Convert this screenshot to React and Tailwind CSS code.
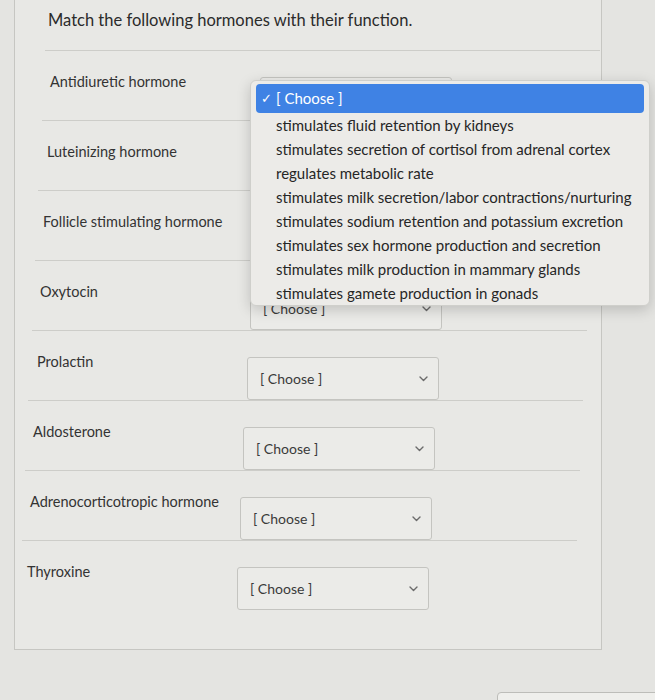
const rows = [
  { label: 'Antidiuretic hormone', shift: 'ml-[30px]', covered: true },
  { label: 'Luteinizing hormone', shift: 'ml-[27px]', covered: true },
  { label: 'Follicle stimulating hormone', shift: 'ml-[23px]', covered: true },
  { label: 'Oxytocin', shift: 'ml-[20px]' },
  { label: 'Prolactin', shift: 'ml-[17px]' },
  { label: 'Aldosterone', shift: 'ml-[13px]' },
  { label: 'Adrenocorticotropic hormone', shift: 'ml-[10px]' },
  { label: 'Thyroxine', shift: 'ml-[7px]' },
]

const options = [
  'stimulates fluid retention by kidneys',
  'stimulates secretion of cortisol from adrenal cortex',
  'regulates metabolic rate',
  'stimulates milk secretion/labor contractions/nurturing',
  'stimulates sodium retention and potassium excretion',
  'stimulates sex hormone production and secretion',
  'stimulates milk production in mammary glands',
  'stimulates gamete production in gonads',
]

function Chevron() {
  return (
    <svg width="9" height="6" viewBox="0 0 9 6" fill="none" className="text-[#6b6b6b]">
      <path d="M1 1l3.5 3.5L8 1" stroke="currentColor" strokeWidth="1.4" strokeLinecap="round" strokeLinejoin="round" />
    </svg>
  )
}

// the top three selects sit under the open menu, so their text is never seen
function FakeSelect({ covered }) {
  return (
    <div className="mt-[26px] flex h-[43px] w-[192px] items-center justify-between rounded-[3px] border border-[#c4c4c0] bg-[#ebebe8] pl-[12px] pr-[10px] text-[14px] text-[#3a3a3a]">
      <span>{covered ? '' : '[ Choose ]'}</span>
      <Chevron />
    </div>
  )
}

export default function App() {
  return (
    <div className="relative h-[700px] w-[655px] overflow-hidden bg-[#e4e4e1] font-['Lato','Open_Sans',sans-serif] text-[#2e2e2e]">
      <div className="ml-[14px] h-[650px] w-[588px] border-x border-b border-[#c6c6c2] bg-[#e8e8e5]">
        <h1 className="ml-[33px] pt-[8px] text-[16.5px] leading-[24px] text-[#2b2b2b]">Match the following hormones with their function.</h1>
        <div className="mt-[18px]">
          {rows.map((r) => (
            <div key={r.label} className={`${r.shift} h-[70px] w-[555px] border-t border-[#cdcdc9]`}>
              <div className="flex pl-[5px]">
                <div className="w-[210px] pt-[21px] text-[14.5px] leading-[20px] text-[#333]">{r.label}</div>
                <FakeSelect covered={r.covered} />
              </div>
            </div>
          ))}
        </div>
      </div>
      <div className="ml-[497px] mt-[42px] h-[20px] w-[170px] rounded-[4px] border border-[#bdbdb9] bg-[#efefec]" />

      <div className="absolute left-[250px] top-[80px] w-[400px] rounded-[6px] border border-[#cfcfcb] bg-[#ecebe8] px-[5px] pt-[3px] font-['Lato',sans-serif] shadow-[0_4px_14px_rgba(0,0,0,0.18)]">
        <div className="flex h-[29px] items-center rounded-[4px] bg-[#3f82e4] pl-[5px] text-[15px] text-white">
          <span className="mr-[4px] text-[13px]">✓</span>
          <span>[ Choose ]</span>
        </div>
        {options.map((o) => (
          <div key={o} className="h-[24px] pl-[20px] text-[15px] leading-[24px] text-[#262626]">{o}</div>
        ))}
      </div>
    </div>
  )
}
